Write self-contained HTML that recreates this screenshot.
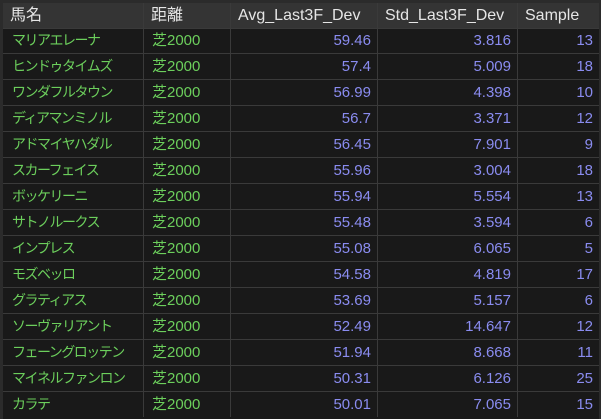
<!DOCTYPE html>
<html><head><meta charset="utf-8"><style>
body{margin:0;width:601px;height:419px;background:#2b2b2b;overflow:hidden;font-family:"Liberation Sans","Noto Sans CJK JP",sans-serif;font-size:15px}
.t{position:absolute;left:3px;top:3px;width:596px;height:416px;background:#191919}
.r{position:absolute;left:0;width:596px;height:25px;border-bottom:1px solid #3a3a3a}
.c{position:absolute;top:0;height:25px;line-height:25px;border-right:1px solid #3a3a3a;box-sizing:border-box;padding:0 8px;white-space:nowrap}
.h{background:#343434;color:#e6e6e6;font-size:16px}
.h .c{padding-left:7px}
.g{color:#6ccf5c}.b{color:#8a8cf0;text-align:right;padding-right:6px}
.c1.g{font-size:14px;letter-spacing:-1.5px;padding-left:9px}
.c1{left:0;width:141px}.c2{left:141px;width:87px}.c3{left:228px;width:147px}.c4{left:375px;width:140px}.c5{left:515px;width:81px;border-right:none}
</style></head><body><div class="t">
<div class="r h" style="top:0"><div class="c c1">馬名</div><div class="c c2">距離</div><div class="c c3">Avg_Last3F_Dev</div><div class="c c4">Std_Last3F_Dev</div><div class="c c5">Sample</div></div>
<div class="r" style="top:25px"><div class="c c1 g">マリアエレーナ</div><div class="c c2 g">芝2000</div><div class="c c3 b">59.46</div><div class="c c4 b">3.816</div><div class="c c5 b">13</div></div>
<div class="r" style="top:51px"><div class="c c1 g">ヒンドゥタイムズ</div><div class="c c2 g">芝2000</div><div class="c c3 b">57.4</div><div class="c c4 b">5.009</div><div class="c c5 b">18</div></div>
<div class="r" style="top:77px"><div class="c c1 g">ワンダフルタウン</div><div class="c c2 g">芝2000</div><div class="c c3 b">56.99</div><div class="c c4 b">4.398</div><div class="c c5 b">10</div></div>
<div class="r" style="top:103px"><div class="c c1 g">ディアマンミノル</div><div class="c c2 g">芝2000</div><div class="c c3 b">56.7</div><div class="c c4 b">3.371</div><div class="c c5 b">12</div></div>
<div class="r" style="top:129px"><div class="c c1 g">アドマイヤハダル</div><div class="c c2 g">芝2000</div><div class="c c3 b">56.45</div><div class="c c4 b">7.901</div><div class="c c5 b">9</div></div>
<div class="r" style="top:155px"><div class="c c1 g">スカーフェイス</div><div class="c c2 g">芝2000</div><div class="c c3 b">55.96</div><div class="c c4 b">3.004</div><div class="c c5 b">18</div></div>
<div class="r" style="top:181px"><div class="c c1 g">ボッケリーニ</div><div class="c c2 g">芝2000</div><div class="c c3 b">55.94</div><div class="c c4 b">5.554</div><div class="c c5 b">13</div></div>
<div class="r" style="top:207px"><div class="c c1 g">サトノルークス</div><div class="c c2 g">芝2000</div><div class="c c3 b">55.48</div><div class="c c4 b">3.594</div><div class="c c5 b">6</div></div>
<div class="r" style="top:233px"><div class="c c1 g">インプレス</div><div class="c c2 g">芝2000</div><div class="c c3 b">55.08</div><div class="c c4 b">6.065</div><div class="c c5 b">5</div></div>
<div class="r" style="top:259px"><div class="c c1 g">モズベッロ</div><div class="c c2 g">芝2000</div><div class="c c3 b">54.58</div><div class="c c4 b">4.819</div><div class="c c5 b">17</div></div>
<div class="r" style="top:285px"><div class="c c1 g">グラティアス</div><div class="c c2 g">芝2000</div><div class="c c3 b">53.69</div><div class="c c4 b">5.157</div><div class="c c5 b">6</div></div>
<div class="r" style="top:311px"><div class="c c1 g">ソーヴァリアント</div><div class="c c2 g">芝2000</div><div class="c c3 b">52.49</div><div class="c c4 b">14.647</div><div class="c c5 b">12</div></div>
<div class="r" style="top:337px"><div class="c c1 g">フェーングロッテン</div><div class="c c2 g">芝2000</div><div class="c c3 b">51.94</div><div class="c c4 b">8.668</div><div class="c c5 b">11</div></div>
<div class="r" style="top:363px"><div class="c c1 g">マイネルファンロン</div><div class="c c2 g">芝2000</div><div class="c c3 b">50.31</div><div class="c c4 b">6.126</div><div class="c c5 b">25</div></div>
<div class="r" style="top:389px;border-bottom:none"><div class="c c1 g">カラテ</div><div class="c c2 g">芝2000</div><div class="c c3 b">50.01</div><div class="c c4 b">7.065</div><div class="c c5 b">15</div></div>
</div></body></html>
